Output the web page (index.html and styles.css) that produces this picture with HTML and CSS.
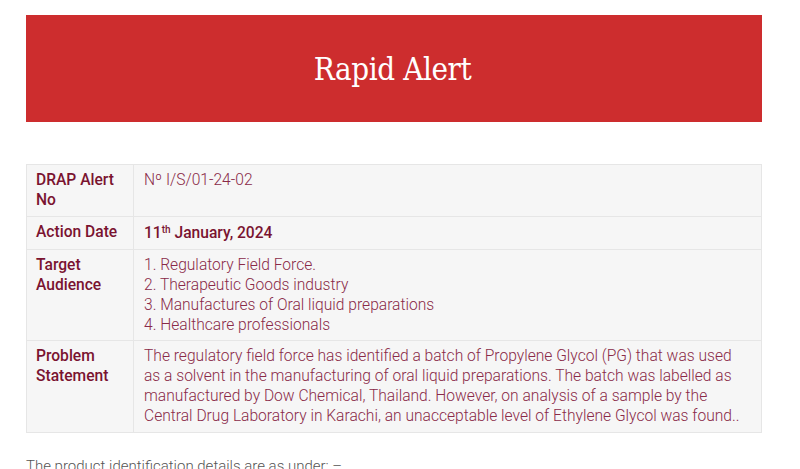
FILE: index.html
```html
<!DOCTYPE html>
<html>
<head>
<meta charset="utf-8">
<link rel="stylesheet" href="styles.css">
</head>
<body>
<div class="page">
  <header class="banner"><h1 class="title">Rapid Alert</h1></header>
  <table class="alert">
    <tr class="tall">
      <th>DRAP Alert No</th>
      <td>Nº I/S/01-24-02</td>
    </tr>
    <tr>
      <th>Action Date</th>
      <td class="strong">11<sup>th</sup> January, 2024</td>
    </tr>
    <tr>
      <th>Target Audience</th>
      <td>1. Regulatory Field Force.<br>2. Therapeutic Goods industry<br>3. Manufactures of Oral liquid preparations<br>4. Healthcare professionals</td>
    </tr>
    <tr class="tall">
      <th>Problem Statement</th>
      <td>The regulatory field force has identified a batch of Propylene Glycol (PG) that was used as a solvent in the manufacturing of oral liquid preparations. The batch was labelled as manufactured by Dow Chemical, Thailand. However, on analysis of a sample by the Central Drug Laboratory in Karachi, an unacceptable level of Ethylene Glycol was found..</td>
    </tr>
  </table>
  <p class="note">The product identification details are as under: –</p>
</div>
</body>
</html>
```
FILE: styles.css
```css
html, body { margin: 0; padding: 0; background: #fff; }
body { font-family: Roboto, "Noto Sans", sans-serif; }
.page { width: 736px; margin: 15px 0 0 26px; }
.banner {
  background: #cd2d2e;
  height: 107px;
  display: flex;
  align-items: center;
  justify-content: center;
}
.title {
  margin: 0;
  color: #fff;
  font-family: "DejaVu Serif Condensed", "DejaVu Serif", serif;
  font-weight: normal;
  font-size: 31px;
  letter-spacing: -0.4px;
  padding-top: 1px;
  padding-right: 3px;
}
.alert {
  margin-top: 42px;
  width: 100%;
  border-collapse: collapse;
  background: #f6f6f6;
  font-size: 15.6px;
  line-height: 20px;
}
.alert th, .alert td {
  border: 1px solid #e6e6e6;
  padding: 5px 10px 5px 9px;
  vertical-align: top;
  text-align: left;
}
.alert .tall th, .alert .tall td { padding-bottom: 6px; }
.alert th {
  width: 87px;
  font-weight: 500;
  color: #7a1330;
}
.alert td {
  font-weight: 300;
  color: #8a2a48;
  padding-left: 10px;
}
.alert td.strong { font-weight: 500; color: #7a1330; padding-top: 6px; padding-bottom: 6px; }
.alert sup { font-size: 10px; line-height: 0; vertical-align: 5px; }
.note {
  margin: 24px 0 0;
  font-size: 15px;
  font-weight: 300;
  color: #555;
}
```
